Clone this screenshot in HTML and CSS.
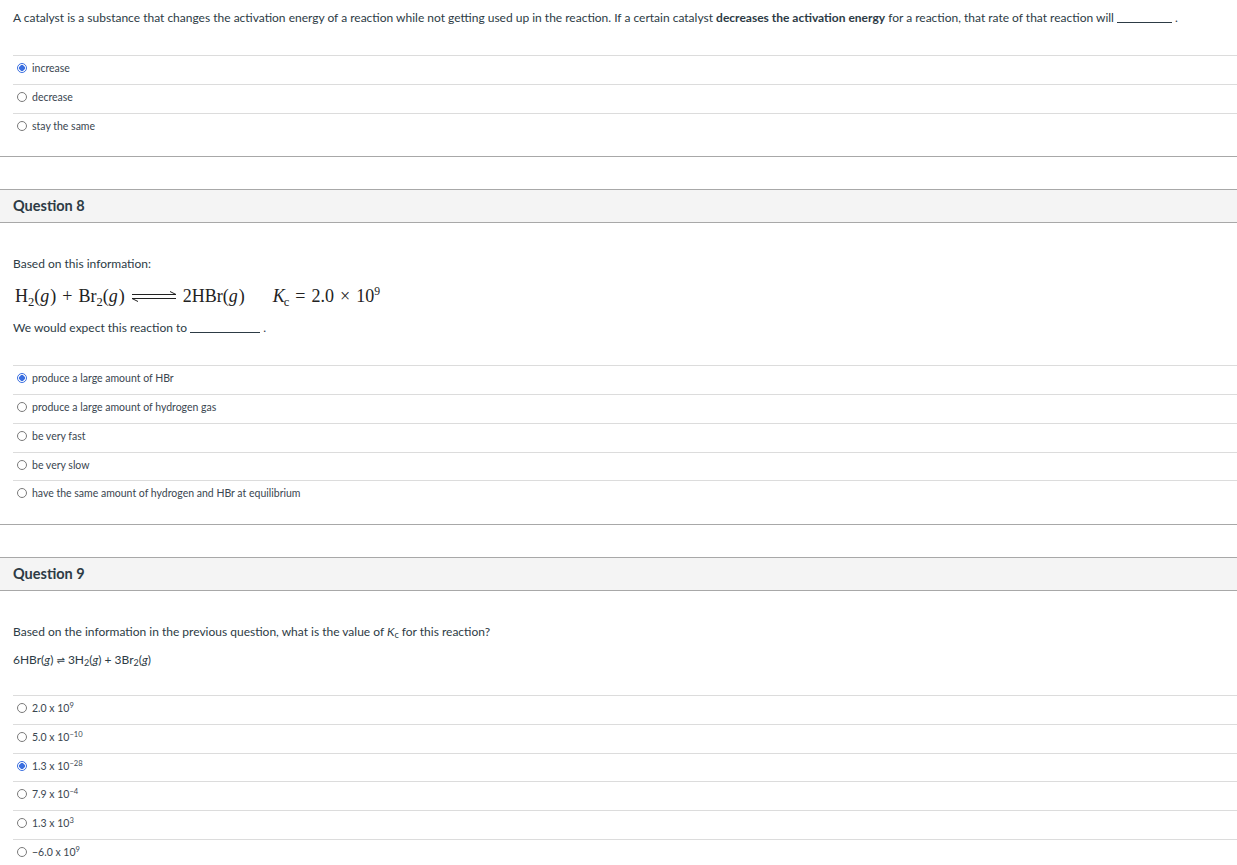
FILE: index.html
```html
<!DOCTYPE html>
<html lang="en">
<head>
<meta charset="utf-8">
<title>Quiz</title>
<link rel="stylesheet" href="styles.css">
</head>
<body>
<div class="quiz">
  <section class="question first">
    <div class="qbody">
      <div class="qtext">
        <p>A catalyst is a substance that changes the activation energy of a reaction while not getting used up in the reaction. If a certain catalyst <strong>decreases the activation energy</strong> for a reaction, that rate of that reaction will <span class="blank"></span> .</p>
      </div>
      <div class="answers">
        <div class="answer"><span class="radio checked"></span><span class="atext">increase</span></div>
        <div class="answer"><span class="radio"></span><span class="atext">decrease</span></div>
        <div class="answer"><span class="radio"></span><span class="atext">stay the same</span></div>
      </div>
    </div>
  </section>

  <section class="question">
    <div class="qheader">Question 8</div>
    <div class="qbody">
      <div class="qtext">
        <p>Based on this information:</p>
        <p class="eq">H<sub>2</sub>(<i>g</i>)<span class="op">+</span>Br<sub>2</sub>(<i>g</i>)<svg class="eqarrow" width="46" height="11" viewBox="0 0 46 11"><path d="M1 3.5H45L39 0.5M45 7.5H1L7 10.5" fill="none" stroke="#222" stroke-width="1"/></svg>2HBr(<i>g</i>)<span class="kc"><i>K</i><sub class="csub">c</sub><span class="op">=</span>2.0<span class="op">×</span>10<sup>9</sup></span></p>
        <p>We would expect this reaction to <span class="blank b2"></span> .</p>
      </div>
      <div class="answers">
        <div class="answer"><span class="radio checked"></span><span class="atext">produce a large amount of HBr</span></div>
        <div class="answer"><span class="radio"></span><span class="atext">produce a large amount of hydrogen gas</span></div>
        <div class="answer"><span class="radio"></span><span class="atext">be very fast</span></div>
        <div class="answer"><span class="radio"></span><span class="atext">be very slow</span></div>
        <div class="answer"><span class="radio"></span><span class="atext">have the same amount of hydrogen and HBr at equilibrium</span></div>
      </div>
    </div>
  </section>

  <section class="question last">
    <div class="qheader">Question 9</div>
    <div class="qbody">
      <div class="qtext">
        <p>Based on the information in the previous question, what is the value of <i>K</i><sub>c</sub> for this reaction?</p>
        <p class="eq2">6HBr(<i>g</i>) <span class="eqsym">⇌</span> 3H<sub>2</sub>(<i>g</i>) + 3Br<sub>2</sub>(<i>g</i>)</p>
      </div>
      <div class="answers tight">
        <div class="answer"><span class="radio"></span><span class="atext">2.0 x 10<sup>9</sup></span></div>
        <div class="answer"><span class="radio"></span><span class="atext">5.0 x 10<sup>−10</sup></span></div>
        <div class="answer"><span class="radio checked"></span><span class="atext">1.3 x 10<sup>−28</sup></span></div>
        <div class="answer"><span class="radio"></span><span class="atext">7.9 x 10<sup>−4</sup></span></div>
        <div class="answer"><span class="radio"></span><span class="atext">1.3 x 10<sup>3</sup></span></div>
        <div class="answer"><span class="radio"></span><span class="atext">−6.0 x 10<sup>9</sup></span></div>
      </div>
    </div>
  </section>
</div>
</body>
</html>
```

FILE: styles.css
```css
html, body {
  margin: 0;
  padding: 0;
  background: #fff;
}
body {
  font-family: Lato, "Open Sans", "Liberation Sans", sans-serif;
  color: #2d3b45;
  overflow: hidden;
}
.question {
  border-bottom: 1px solid #a8a8a8;
  padding-bottom: 15px;
  margin-bottom: 32px;
}
.question.last {
  border-bottom: none;
}
.qheader {
  height: 32px;
  line-height: 32px;
  background: #f4f4f4;
  border-top: 1px solid #a8a8a8;
  border-bottom: 1px solid #a8a8a8;
  padding-left: 13px;
  font-size: 14.5px;
  font-weight: 700;
  color: #2d3b45;
}
.qbody {
  padding: 32px 0 0 13px;
}
.question.first .qbody {
  padding-top: 9px;
}
.qtext {
  font-size: 12px;
  line-height: 18px;
}
.qtext p {
  margin: 0 0 10px;
}
.qtext p:last-child {
  margin-bottom: 0;
}
.qtext strong {
  font-weight: 700;
}
.qtext sub {
  font-size: 0.75em;
  vertical-align: -0.25em;
  line-height: 0;
}
.blank {
  display: inline-block;
  width: 55px;
  border-bottom: 1px solid #2d3b45;
  vertical-align: -1px;
}
.blank.b2 {
  width: 70px;
}
.eq {
  font-family: "Liberation Serif", "DejaVu Serif", serif;
  font-size: 18px;
  line-height: 26px;
  color: #222;
  padding-left: 2px;
  white-space: nowrap;
}
.eq sub {
  font-size: 0.7em;
  vertical-align: -0.3em;
  line-height: 0;
}
.eq i {
  font-style: italic;
  margin-right: 1px;
}
.op {
  margin: 0 6px;
}
.eqarrow {
  display: inline-block;
  vertical-align: middle;
  margin: -3px 6px 0 6px;
}
.kc {
  margin-left: 28px;
}
.kc sup {
  font-size: 0.65em;
  vertical-align: 0.6em;
  line-height: 0;
}
.csub {
  margin-left: -2px;
}
.eq2 {
  font-size: 12px;
}
.eqsym {
  font-family: "DejaVu Sans", sans-serif;
  font-size: 10px;
}
.answers {
  margin-top: 28px;
}
.answers.tight {
  margin-top: 25px;
}
.answer {
  height: 28.75px;
  box-sizing: border-box;
  border-top: 1px solid #dcdcdc;
  display: flex;
  align-items: flex-start;
  padding-top: 4px;
  font-size: 10.5px;
  line-height: 16px;
  color: #3a4650;
}
.radio {
  width: 10px;
  height: 10px;
  box-sizing: border-box;
  border: 1px solid #7a7a7a;
  border-radius: 50%;
  background: #fff;
  margin: 3px 5px 0 4px;
  flex: none;
}
.radio.checked {
  border-color: #3b6fe0;
  background: radial-gradient(circle, #3b6fe0 0 2.6px, #fff 3.1px);
}
.atext sup {
  font-size: 0.72em;
  vertical-align: 0.5em;
  line-height: 0;
}
```
